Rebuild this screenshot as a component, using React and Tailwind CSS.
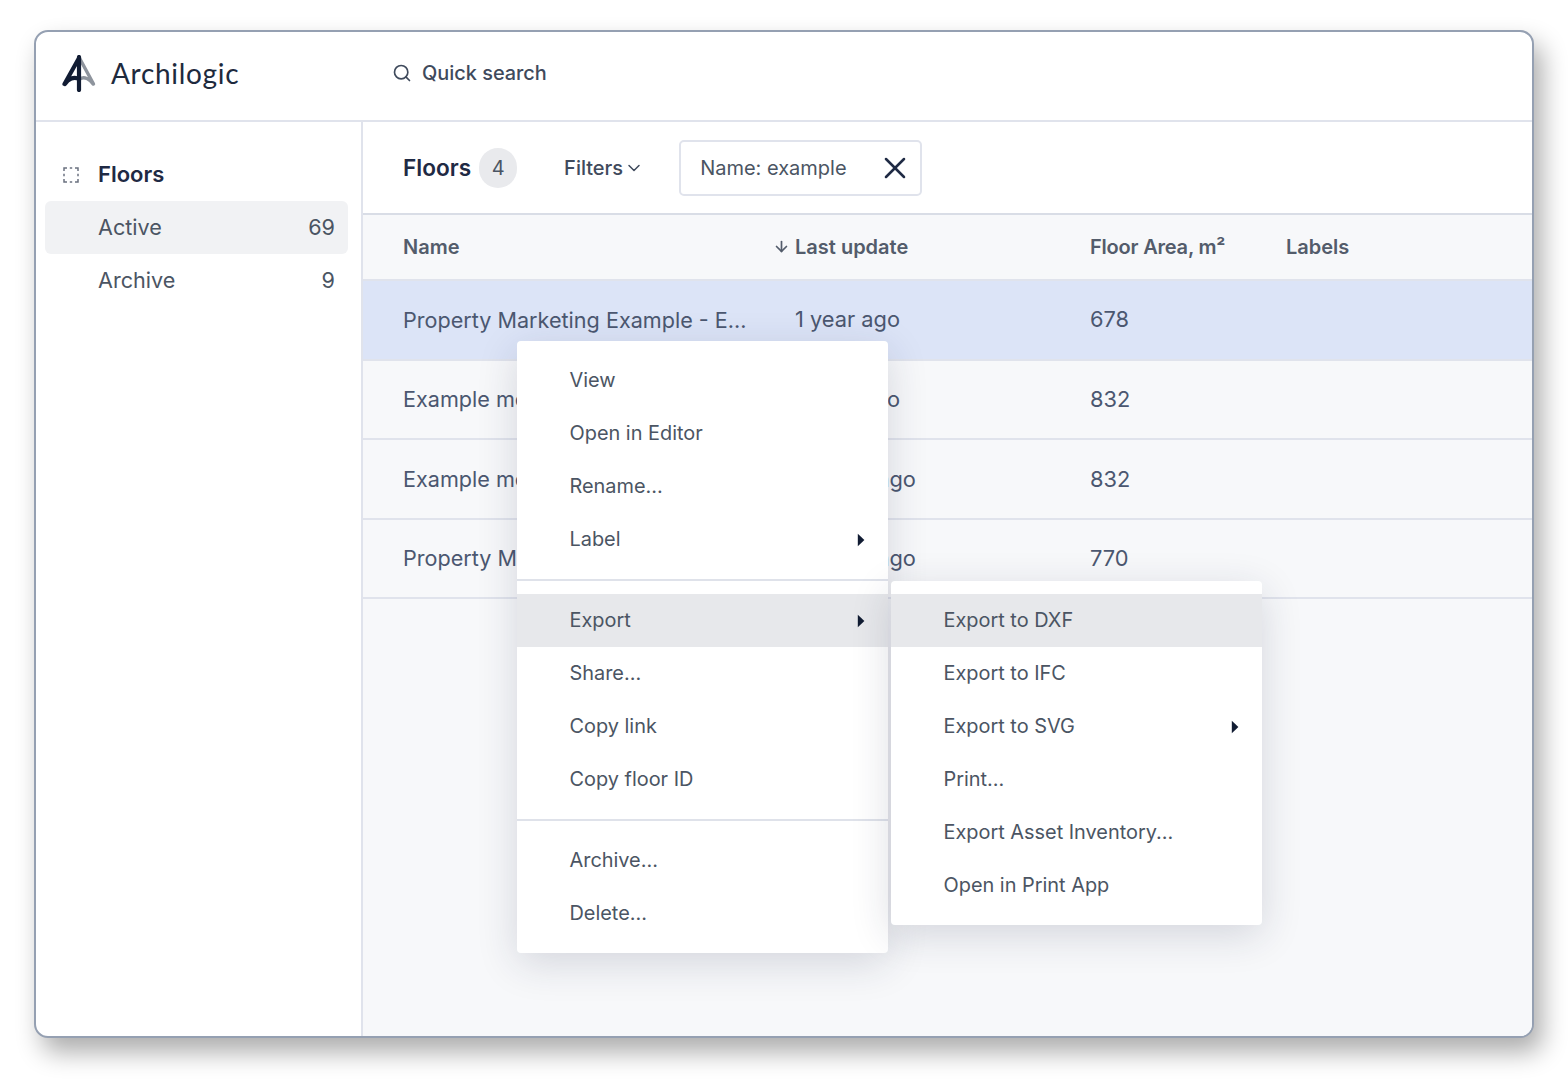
import React from 'react';
import { Search, ChevronDown, X, ArrowDown } from 'lucide-react';

const rows = [
    { name: 'Property Marketing Example - E...', updated: '1 year ago', area: '678', selected: true },
    { name: 'Example model - Export', updated: '1 year ago', area: '832' },
    { name: 'Example model - Import', updated: '2 years ago', area: '832' },
    { name: 'Property Marketing Example', updated: '2 years ago', area: '770' },
];

const Caret = () => (
    <svg width="8" height="14" viewBox="0 0 8 14" className="text-[#111c33]">
        <path d="M0.8 0.8 L7.4 7 L0.8 13.2 Z" fill="currentColor" />
    </svg>
);

const MenuItem = ({ label, active, caret }) => (
    <div className={`h-[53px] pl-[52.5px] pr-[23px] flex items-center justify-between text-[19.9px] text-[#4b5563] ${active ? 'bg-[#e7e8eb]' : ''}`}>
        <span>{label}</span>
        {caret && <Caret />}
    </div>
);

const Logo = () => (
    <svg width="34" height="37" viewBox="0 0 34 37" fill="none" strokeLinecap="round" className="shrink-0">
        <path d="M18 4 L31.5 29 M18 24 C22 21 28 24 31 29" stroke="#8e949d" strokeWidth="3.4" />
        <path d="M17 3 L2.5 29 M3 29 C6 24 12 21 17 24 M17 2 V35" stroke="#111c33" strokeWidth="4.2" />
    </svg>
);

const App = () => {
    return (
        <div className="w-[1568px] h-[1084px] bg-white pt-[30px] pl-[34px] overflow-hidden" style={{ fontFamily: 'Inter, sans-serif' }}>
            <div className="relative w-[1500px] h-[1008px] rounded-[14px] border-2 border-[#95a0b2] bg-white flex flex-col shadow-[8px_14px_26px_rgba(0,0,0,0.33)]">
                <header className="h-[90px] shrink-0 border-b-2 border-[#e0e3ec] pb-[5px] flex items-center">
                    <div className="w-[327px] pl-[26px] flex items-center gap-[15px]">
                        <Logo />
                        <span className="text-[28px] leading-none text-[#1e2a3d] tracking-[0.7px] -mt-[2px]" style={{ fontFamily: 'Lato, sans-serif' }}>Archilogic</span>
                    </div>
                    <div className="flex items-center gap-[10px] pl-[29px] text-[19.9px] font-medium text-[#3f4a5c]">
                        <Search size={20} strokeWidth={2} />
                        <span>Quick search</span>
                    </div>
                </header>

                <div className="flex flex-1 min-h-0">
                    <aside className="w-[327px] shrink-0 border-r-2 border-[#e0e3ec] pl-[9px] pr-[13px] pt-[26px]">
                        <div className="h-[53px] pl-[18px] flex items-center gap-[19px] text-[22px] font-semibold text-[#1f2a44]">
                            <svg width="16" height="16" viewBox="0 0 16 16" fill="none" stroke="#6b7280" strokeWidth="1.5">
                                <path d="M1 4 V1 H4 M6.8 1 H9.2 M12 1 H15 V4 M15 6.8 V9.2 M15 12 V15 H12 M9.2 15 H6.8 M4 15 H1 V12 M1 9.2 V6.8" />
                            </svg>
                            <span>Floors</span>
                        </div>
                        <div className="h-[53px] rounded-[6px] bg-[#f1f2f4] pl-[53px] pr-[13px] flex items-center justify-between text-[21.6px] text-[#4b5563]">
                            <span>Active</span>
                            <span>69</span>
                        </div>
                        <div className="h-[53px] pl-[53px] pr-[13px] flex items-center justify-between text-[21.6px] text-[#4b5563]">
                            <span>Archive</span>
                            <span>9</span>
                        </div>
                    </aside>

                    <main className="flex-1 min-w-0 bg-[#f7f8fa] rounded-br-[12px]">
                        <div className="h-[93px] bg-white border-b-2 border-[#d9dde6] pl-10 flex items-center">
                            <span className="text-[22.6px] font-semibold text-[#1f2a44]">Floors</span>
                            <span className="ml-2 w-[38px] h-10 rounded-full bg-[#e9eaed] flex items-center justify-center text-[20px] text-[#4b5563]">4</span>
                            <span className="ml-[47px] text-[20px] font-medium text-[#3f4a5c]">Filters</span>
                            <ChevronDown size={20} strokeWidth={1.8} className="ml-[1px] text-[#3f4a5c]" />
                            <div className="ml-[35px] w-[243px] h-[56px] rounded-[5px] border-2 border-[#e0e3ec] pl-[19px] pr-[7px] flex items-center justify-between text-[20px] text-[#4b5563]">
                                <span>Name: example</span>
                                <X size={36} strokeWidth={1.7} className="text-[#1f2a44]" />
                            </div>
                        </div>

                        <div className="h-[66px] border-b-2 border-[#e0e3ec] pl-10 flex items-center text-[20px] font-semibold text-[#535c6b]">
                            <div className="w-[392px]">Name</div>
                            <div className="w-[295px] relative">
                                <ArrowDown size={17} strokeWidth={2.4} className="absolute -left-[22px] top-[6px]" />
                                Last update
                            </div>
                            <div className="w-[196px] tracking-[-0.2px]">Floor Area, m²</div>
                            <div>Labels</div>
                        </div>

                        {rows.map(r => (
                            <div key={r.name} className={`h-[79.6px] border-b-2 border-[#e0e3ec] pl-10 flex items-center text-[21.8px] text-[#4b5770] ${r.selected ? 'bg-[#dce4f7]' : ''}`}>
                                <div className="w-[392px] whitespace-nowrap text-[21.6px]">{r.name}</div>
                                <div className="w-[295px]">{r.updated}</div>
                                <div className="w-[196px]">{r.area}</div>
                            </div>
                        ))}
                    </main>
                </div>

                <div className="absolute left-[481px] top-[309px] w-[371px] h-[612px] rounded-[4px] bg-white py-[13px] shadow-[0_10px_40px_rgba(30,40,70,0.16)]">
                    <MenuItem label="View" />
                    <MenuItem label="Open in Editor" />
                    <MenuItem label="Rename..." />
                    <MenuItem label="Label" caret />
                    <div className="h-[2px] bg-[#dfe2ea] mt-[13px] mb-[13px]" />
                    <MenuItem label="Export" active caret />
                    <MenuItem label="Share..." />
                    <MenuItem label="Copy link" />
                    <MenuItem label="Copy floor ID" />
                    <div className="h-[2px] bg-[#dfe2ea] mt-[13px] mb-[13px]" />
                    <MenuItem label="Archive..." />
                    <MenuItem label="Delete..." />
                </div>

                <div className="absolute left-[855px] top-[549px] w-[371px] h-[344px] rounded-[4px] bg-white py-[13px] shadow-[0_10px_40px_rgba(30,40,70,0.16)]">
                    <MenuItem label="Export to DXF" active />
                    <MenuItem label="Export to IFC" />
                    <MenuItem label="Export to SVG" caret />
                    <MenuItem label="Print..." />
                    <MenuItem label="Export Asset Inventory..." />
                    <MenuItem label="Open in Print App" />
                </div>
            </div>
        </div>
    );
};

export default App;
